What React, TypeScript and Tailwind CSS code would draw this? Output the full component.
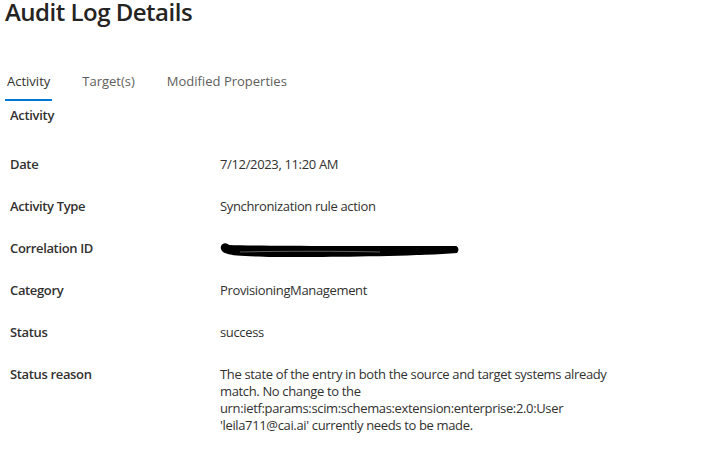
import React from "react";

const font = { fontFamily: '"Open Sans", "Noto Sans", sans-serif' };

const rows: { label: string; value: React.ReactNode }[] = [
  { label: "Date", value: "7/12/2023, 11:20 AM" },
  { label: "Activity Type", value: "Synchronization rule action" },
  {
    label: "Correlation ID",
    value: (
      <svg width="240" height="17" viewBox="0 0 240 17" className="block mt-[2px] -mb-[2px]">
        {/* faint text underneath the redaction */}
        <path d="M30 5 L200 5" stroke="#b5b5b5" strokeWidth="1" strokeDasharray="2 5" />
        <path
          d="M1 4 C3 0 7 1 9 3 C40 4 120 4 236 4 C239 5 239 9 237 11 C200 14 120 15 80 15 C40 15 12 14 8 12 C3 11 0 8 1 4 Z"
          fill="#000"
        />
        <path d="M20 10 C60 9 120 9 160 10" stroke="#777" strokeWidth="0.8" fill="none" />
      </svg>
    ),
  },
  { label: "Category", value: "ProvisioningManagement" },
  { label: "Status", value: "success" },
  {
    label: "Status reason",
    value:
      "The state of the entry in both the source and target systems already match. No change to the urn:ietf:params:scim:schemas:extension:enterprise:2.0:User 'leila711@cai.ai' currently needs to be made.",
  },
];

const tabs = ["Activity", "Target(s)", "Modified Properties"];

export default function App() {
  return (
    <div className="w-[711px] h-[456px] bg-white text-[#323130] overflow-hidden" style={font}>
      {/* Title */}
      <h1 className="pl-[5px] text-[24px] leading-[24px] font-semibold tracking-[-0.5px] text-[#252423]">
        Audit Log Details
      </h1>

      {/* Tabs */}
      <div className="mt-[40px] flex pl-[6px] gap-[30px] text-[13px]">
        {tabs.map((t, i) => (
          <div key={t} className="flex flex-col">
            <div
              className={
                "h-[35px] flex items-center px-[1px] " + (i === 0 ? "text-[#323130]" : "text-[#605e5c]")
              }
            >
              {t}
            </div>
            <div className={"h-[2px] -mx-[1px] " + (i === 0 ? "bg-[#0078d4]" : "bg-transparent")} />
          </div>
        ))}
      </div>

      {/* Section */}
      <div className="mt-[4px] pl-[10px] text-[13px] leading-[20px] font-semibold tracking-[-0.3px]">
        Activity
      </div>

      <div className="mt-[19px] text-[13px] tracking-[-0.35px]">
        {rows.map((r) => (
          <div key={r.label} className="flex pl-[10px] pt-[12px] pb-[13px] leading-[17px]">
            <div className="w-[210px] shrink-0 font-semibold">{r.label}</div>
            <div className="w-[400px]">{r.value}</div>
          </div>
        ))}
      </div>
    </div>
  );
}
